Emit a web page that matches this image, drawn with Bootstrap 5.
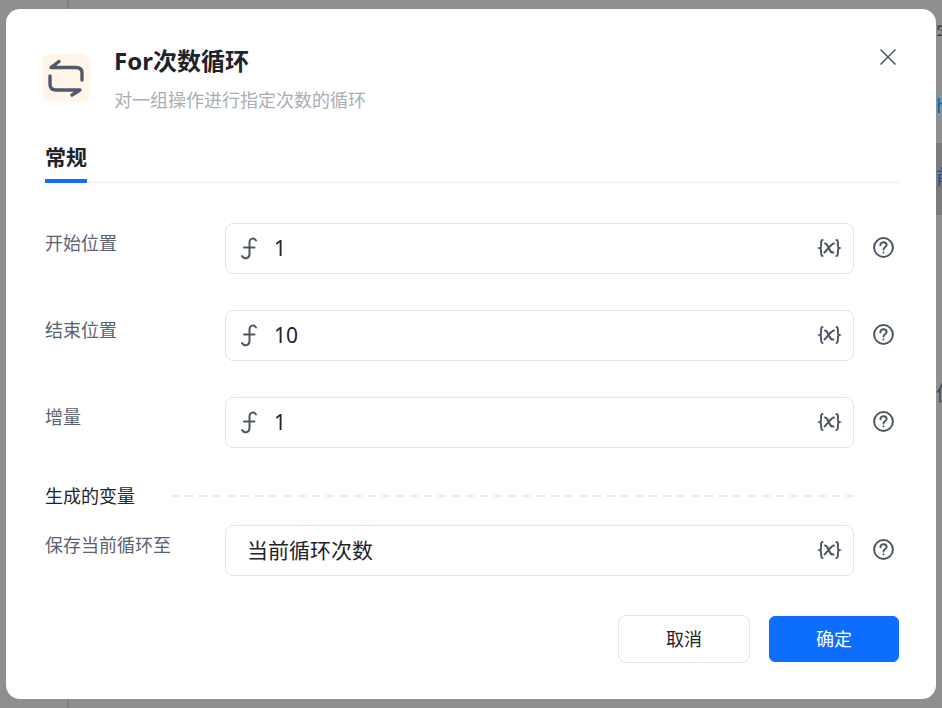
<!doctype html>
<html lang="zh">
<head>
<meta charset="utf-8">
<title>For次数循环</title>
<link href="https://cdn.jsdelivr.net/npm/bootstrap@5.3.0/dist/css/bootstrap.min.css" rel="stylesheet">
<style>
html,body{height:708px;overflow:hidden}
body{background:#8f8f8f;padding:9px 6px;font-family:"Noto Sans","Noto Sans CJK SC",sans-serif;color:#1f2329;position:relative}
.bg-line{position:absolute;left:67px;top:0;bottom:0;width:2px;background:#808080}
.bg-band{position:absolute;right:0;width:6px;overflow:hidden;font-size:20px;line-height:28px;white-space:nowrap}
.band-a{top:20px;height:28px;color:#3c3c3c}
.band-b{top:92px;height:28px;background:#85939a;color:#0a6aa8}
.band-c{top:143px;height:72px;background:#7b7b7b;color:#1a4f9c;line-height:70px}
.band-d{top:380px;height:28px;color:#444}
.sheet{position:relative;width:930px;height:690px;border:0;border-radius:14px;background:#fff;padding:45px 37px 0 39px}
.head-ic{width:48px;height:48px;border-radius:8px;background:#fff6e9;flex:none;margin-left:-3px}
.head-copy{margin-left:24px;margin-top:-9px}
.head-title{font-size:24px;font-weight:700;line-height:32px;margin:0;color:#1f2329}
.head-sub{font-size:18px;line-height:26px;color:#a9adb6;margin-top:10px}
.shut{position:absolute;top:38px;right:38px;padding:0;border:0;background:none;width:20px;height:20px;line-height:0}
.tabbar{margin-top:31px;border-bottom:1px solid #eceef0;height:39px}
.tabitem{display:inline-block;height:39px;font-size:21px;font-weight:700;line-height:26px;border-bottom:4px solid #0d6efd;color:#1f2329}
.field-row{height:51px;margin-bottom:36px}
.field-row.last{margin-bottom:0}
.field-lab{width:180px;flex:none;font-size:18px;line-height:26px;color:#5a6270;padding-top:7px}
.field-box{width:629px;height:51px;flex:none;border:1px solid #e2e4ea;border-radius:8px;background:#fff;padding:0 11px 2px 13px}
.field-val{font-size:21px;line-height:30px;color:#1f2329;margin-left:15px;flex:1}
.field-val.plain{margin-left:8px}
.help-ic{margin-left:19px;flex:none;margin-bottom:2px}
.sec-row{height:26px;margin-top:-1px;margin-bottom:16px}
.sec-name{font-size:18px;line-height:26px;color:#1f2329}
.sec-dash{flex:1;height:2px;margin-left:36px;margin-right:45px;background:repeating-linear-gradient(90deg,#e9eaed 0 8px,transparent 8px 14.06px)}
.foot-row{position:absolute;right:37px;top:606px}
.btn-no{width:132px;height:48px;font-size:18px;border:1px solid #e4e5ea;border-radius:8px;background:#fff;color:#1f2329;padding:0}
.btn-yes{width:130px;height:46px;font-size:18px;border-radius:6px;margin-left:19px;padding:0;--bs-btn-bg:#0d6efd}
.fields{margin-top:40px}
</style>
</head>
<body>
<div class="bg-line"></div>
<div class="bg-band band-a">字</div>
<div class="bg-band band-b">h</div>
<div class="bg-band band-c">前</div>
<div class="bg-band band-d">值</div>

<div class="modal-content sheet">
  <div class="d-flex">
    <div class="head-ic">
      <svg width="48" height="48" viewBox="0 0 48 48" fill="none" stroke="#515a68" stroke-width="3.4" stroke-linecap="round" stroke-linejoin="round">
        <path d="M17 7.5 9 13.5H34Q40 13.5 40 19V26"/>
        <path d="M8 22V30Q8 36 14 36H38L30 41"/>
      </svg>
    </div>
    <div class="head-copy">
      <h5 class="head-title">For次数循环</h5>
      <div class="head-sub">对一组操作进行指定次数的循环</div>
    </div>
  </div>
  <button class="shut" type="button" aria-label="关闭">
    <svg width="20" height="20" viewBox="0 0 20 20" stroke="#4e5664" stroke-width="1.5" fill="none"><path d="M2.5 2.5 17.5 17.5M17.5 2.5 2.5 17.5"/></svg>
  </button>

  <div class="tabbar"><span class="tabitem">常规</span></div>

  <div class="fields">
    <div class="field-row d-flex">
      <div class="field-lab">开始位置</div>
      <div class="field-box d-flex align-items-center">
        <svg width="20" height="26" viewBox="0 0 20 26" fill="none" stroke="#4e5664" stroke-width="2" stroke-linecap="round"><path d="M17 5.5C15 2.5 11 3 10.5 7V19C10.5 24 5 24.5 3 21M5 12.5H15.5"/></svg>
        <span class="field-val">1</span>
        <svg width="26" height="20" viewBox="0 0 26 20" fill="none" stroke="#4e5664" stroke-width="2" stroke-linecap="round"><path d="M6.5 2C5 2 5.1 4 5.1 7S5.1 9.5 3.8 10C5.1 10.5 5.1 11 5.1 13S5 18 6.5 18M20.5 2C22 2 21.9 4 21.9 7S21.9 9.5 23.2 10C21.9 10.5 21.9 11 21.9 13S22 18 20.5 18M9 5.5C11 5.5 11.5 7.5 13 10.5S15 15 17.5 14.5M18 5.5C15 5.5 11.5 12 8.5 14.5"/></svg>
      </div>
      <svg class="help-ic align-self-center" width="21" height="21" viewBox="0 0 21 21" fill="none" stroke="#4e5664" stroke-width="2" stroke-linecap="round"><circle cx="10.5" cy="10.5" r="9.4"/><path d="M7.4 8.2C7.4 6.4 8.8 5.3 10.5 5.3S13.6 6.4 13.6 8C13.6 10.2 10.5 10.2 10.5 12.4"/><path d="M10.5 15.4v.2"/></svg>
    </div>
    <div class="field-row d-flex">
      <div class="field-lab">结束位置</div>
      <div class="field-box d-flex align-items-center">
        <svg width="20" height="26" viewBox="0 0 20 26" fill="none" stroke="#4e5664" stroke-width="2" stroke-linecap="round"><path d="M17 5.5C15 2.5 11 3 10.5 7V19C10.5 24 5 24.5 3 21M5 12.5H15.5"/></svg>
        <span class="field-val">10</span>
        <svg width="26" height="20" viewBox="0 0 26 20" fill="none" stroke="#4e5664" stroke-width="2" stroke-linecap="round"><path d="M6.5 2C5 2 5.1 4 5.1 7S5.1 9.5 3.8 10C5.1 10.5 5.1 11 5.1 13S5 18 6.5 18M20.5 2C22 2 21.9 4 21.9 7S21.9 9.5 23.2 10C21.9 10.5 21.9 11 21.9 13S22 18 20.5 18M9 5.5C11 5.5 11.5 7.5 13 10.5S15 15 17.5 14.5M18 5.5C15 5.5 11.5 12 8.5 14.5"/></svg>
      </div>
      <svg class="help-ic align-self-center" width="21" height="21" viewBox="0 0 21 21" fill="none" stroke="#4e5664" stroke-width="2" stroke-linecap="round"><circle cx="10.5" cy="10.5" r="9.4"/><path d="M7.4 8.2C7.4 6.4 8.8 5.3 10.5 5.3S13.6 6.4 13.6 8C13.6 10.2 10.5 10.2 10.5 12.4"/><path d="M10.5 15.4v.2"/></svg>
    </div>
    <div class="field-row d-flex">
      <div class="field-lab">增量</div>
      <div class="field-box d-flex align-items-center">
        <svg width="20" height="26" viewBox="0 0 20 26" fill="none" stroke="#4e5664" stroke-width="2" stroke-linecap="round"><path d="M17 5.5C15 2.5 11 3 10.5 7V19C10.5 24 5 24.5 3 21M5 12.5H15.5"/></svg>
        <span class="field-val">1</span>
        <svg width="26" height="20" viewBox="0 0 26 20" fill="none" stroke="#4e5664" stroke-width="2" stroke-linecap="round"><path d="M6.5 2C5 2 5.1 4 5.1 7S5.1 9.5 3.8 10C5.1 10.5 5.1 11 5.1 13S5 18 6.5 18M20.5 2C22 2 21.9 4 21.9 7S21.9 9.5 23.2 10C21.9 10.5 21.9 11 21.9 13S22 18 20.5 18M9 5.5C11 5.5 11.5 7.5 13 10.5S15 15 17.5 14.5M18 5.5C15 5.5 11.5 12 8.5 14.5"/></svg>
      </div>
      <svg class="help-ic align-self-center" width="21" height="21" viewBox="0 0 21 21" fill="none" stroke="#4e5664" stroke-width="2" stroke-linecap="round"><circle cx="10.5" cy="10.5" r="9.4"/><path d="M7.4 8.2C7.4 6.4 8.8 5.3 10.5 5.3S13.6 6.4 13.6 8C13.6 10.2 10.5 10.2 10.5 12.4"/><path d="M10.5 15.4v.2"/></svg>
    </div>
    <div class="sec-row d-flex align-items-center">
      <span class="sec-name">生成的变量</span>
      <span class="sec-dash"></span>
    </div>
    <div class="field-row last d-flex">
      <div class="field-lab">保存当前循环至</div>
      <div class="field-box d-flex align-items-center">
        <span class="field-val plain">当前循环次数</span>
        <svg width="26" height="20" viewBox="0 0 26 20" fill="none" stroke="#4e5664" stroke-width="2" stroke-linecap="round"><path d="M6.5 2C5 2 5.1 4 5.1 7S5.1 9.5 3.8 10C5.1 10.5 5.1 11 5.1 13S5 18 6.5 18M20.5 2C22 2 21.9 4 21.9 7S21.9 9.5 23.2 10C21.9 10.5 21.9 11 21.9 13S22 18 20.5 18M9 5.5C11 5.5 11.5 7.5 13 10.5S15 15 17.5 14.5M18 5.5C15 5.5 11.5 12 8.5 14.5"/></svg>
      </div>
      <svg class="help-ic align-self-center" width="21" height="21" viewBox="0 0 21 21" fill="none" stroke="#4e5664" stroke-width="2" stroke-linecap="round"><circle cx="10.5" cy="10.5" r="9.4"/><path d="M7.4 8.2C7.4 6.4 8.8 5.3 10.5 5.3S13.6 6.4 13.6 8C13.6 10.2 10.5 10.2 10.5 12.4"/><path d="M10.5 15.4v.2"/></svg>
    </div>
  </div>

  <div class="foot-row d-flex align-items-center">
    <button type="button" class="btn btn-no">取消</button>
    <button type="button" class="btn btn-primary btn-yes">确定</button>
  </div>
</div>
</body>
</html>
